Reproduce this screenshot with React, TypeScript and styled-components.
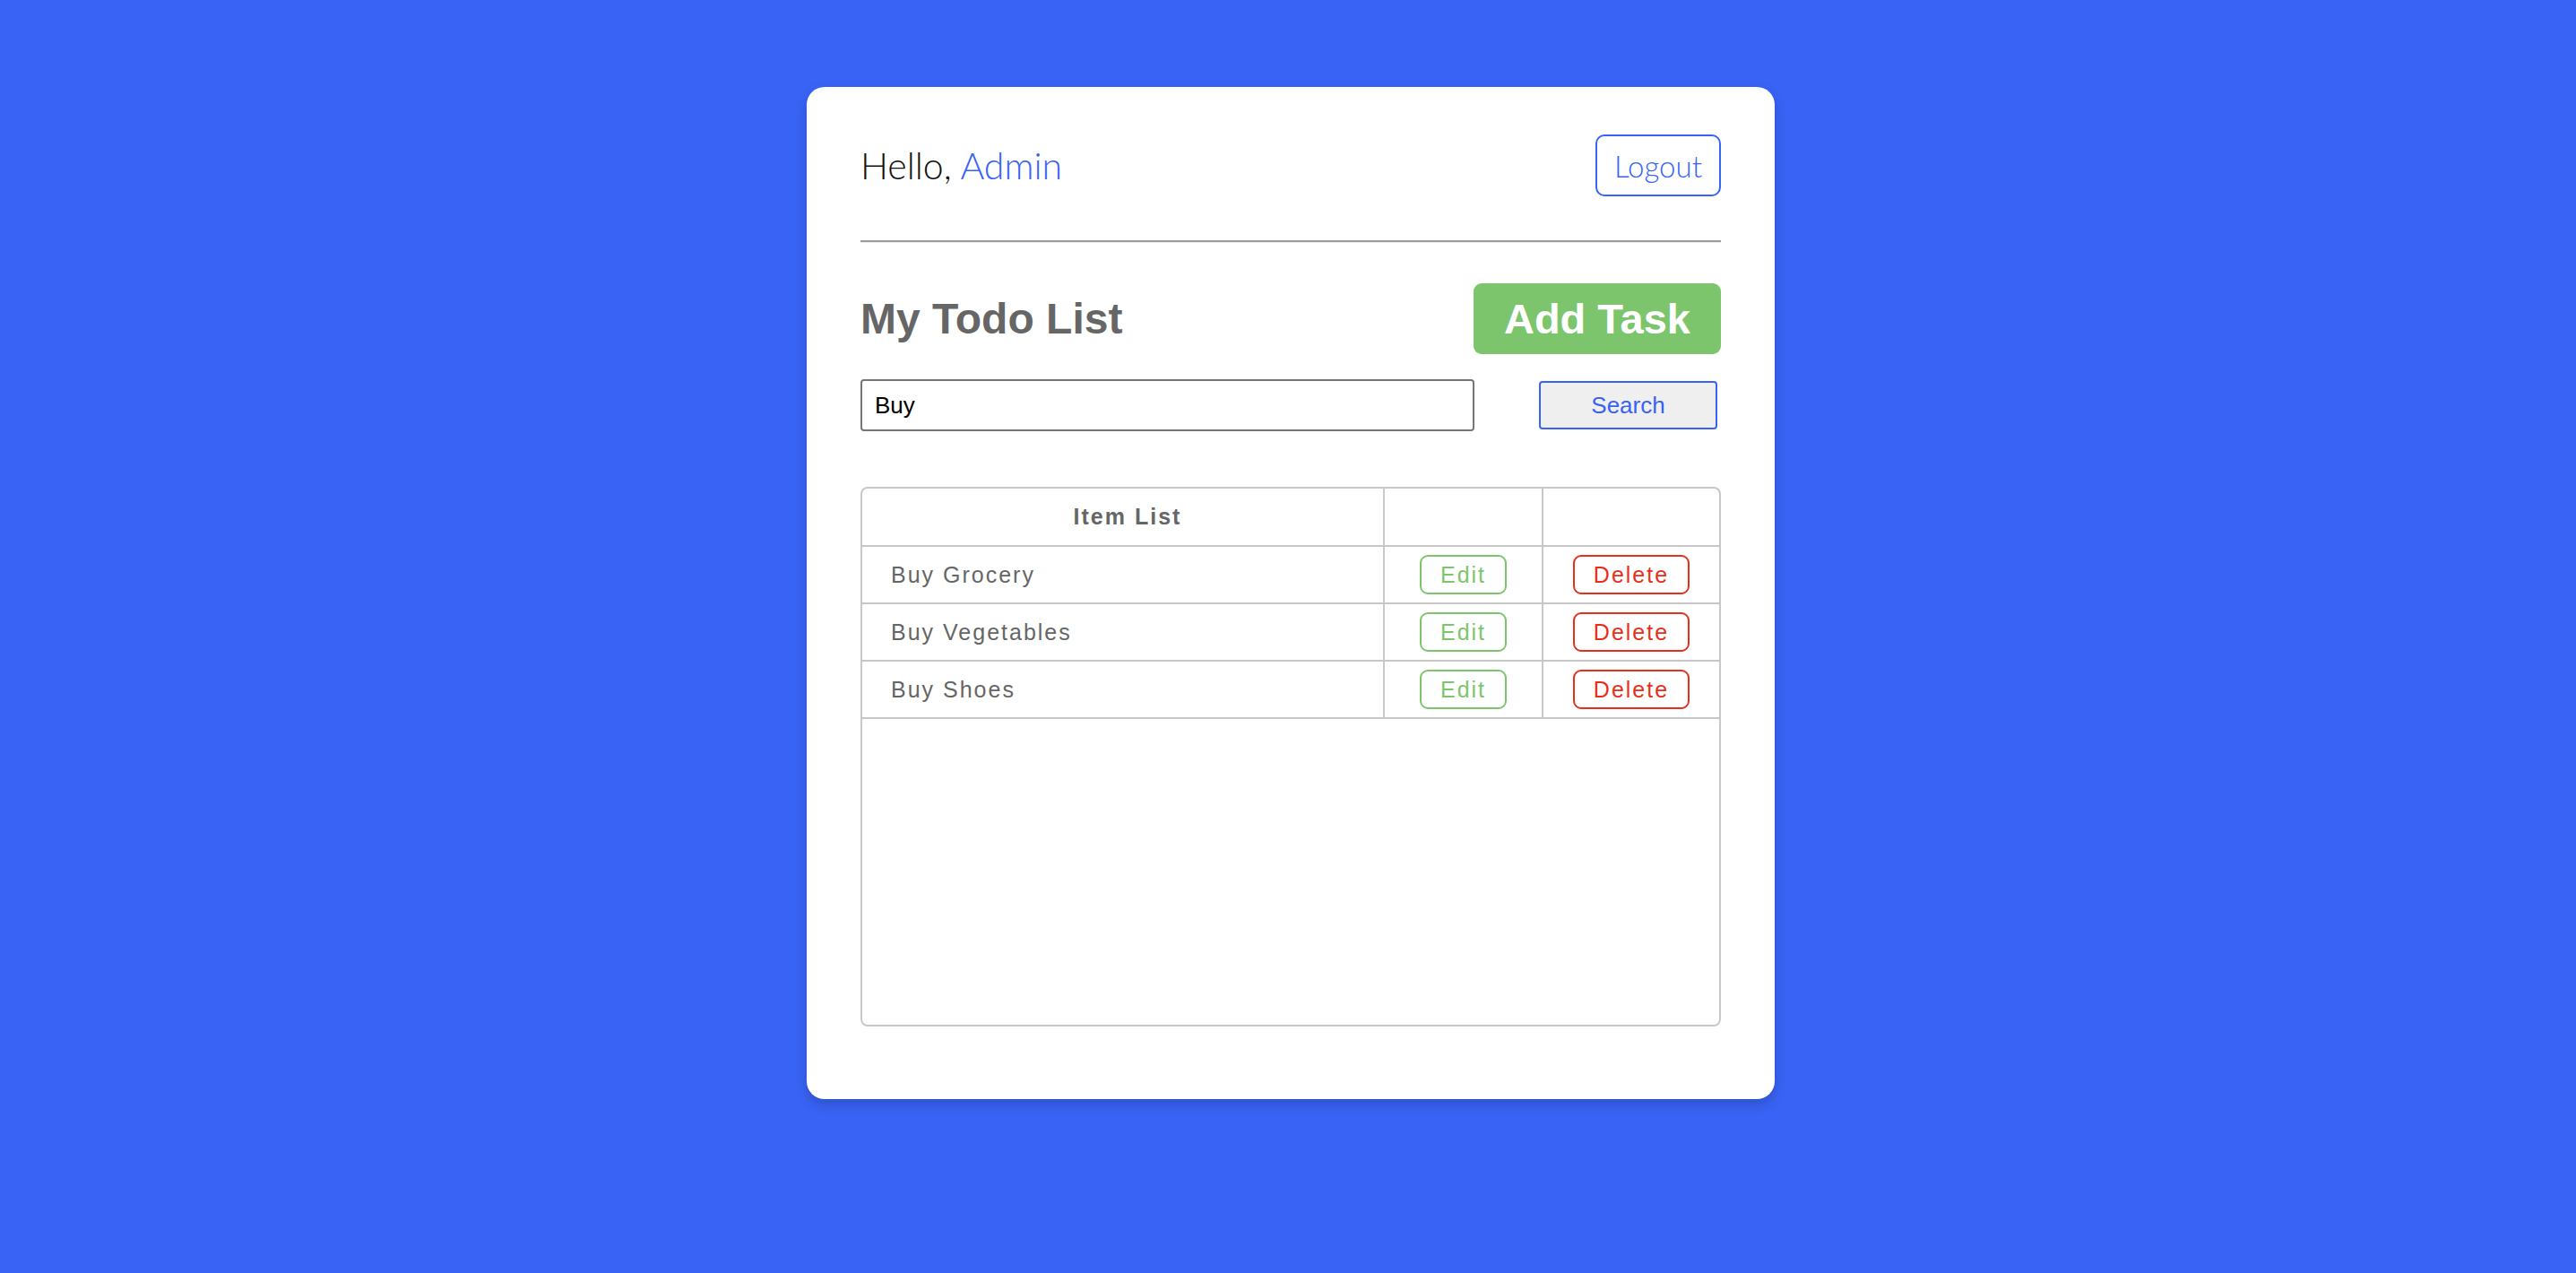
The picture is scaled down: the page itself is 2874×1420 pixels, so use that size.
import styled, { createGlobalStyle } from "styled-components";

const blue = "#3963f5";
const green = "#7cc56d";
const red = "#e5301c";
const line = "#c8c8c8";

const GlobalStyle = createGlobalStyle`
  html, body {
    margin: 0;
    padding: 0;
    background: ${blue};
    min-height: 100%;
  }
  body {
    font-family: "Liberation Sans", Arial, sans-serif;
  }
  * { box-sizing: border-box; }
`;

const Page = styled.div`
  min-height: 1420px;
  padding: 97px 0 0 6px;
`;

const Card = styled.div`
  width: 1080px;
  height: 1129px;
  margin: 0 auto;
  padding: 53px 60px 81px;
  background: #fff;
  border-radius: 20px;
  box-shadow: 0 6px 14px rgba(0, 0, 0, 0.18);
  display: flex;
  flex-direction: column;
`;

const Header = styled.div`
  display: flex;
  justify-content: space-between;
  align-items: center;
  height: 69px;
`;

const Greeting = styled.div`
  font-family: "Lato", "Open Sans", sans-serif;
  font-weight: 300;
  font-size: 41px;
  color: #111;
`;

const Name = styled.span`
  color: ${blue};
`;

const OutlineButton = styled.button<{ $color: string }>`
  font-family: "Lato", "Open Sans", sans-serif;
  font-weight: 300;
  font-size: 33px;
  color: ${(p) => p.$color};
  background: #fff;
  border: 2px solid ${(p) => p.$color};
  border-radius: 10px;
  height: 69px;
  width: 140px;
  padding: 0;
`;

const Divider = styled.hr`
  margin: 49px 0 0;
  border: none;
  border-top: 2px solid #9b9b9b;
  border-bottom: 1px solid #eee;
  height: 0;
`;

const TitleRow = styled.div`
  display: flex;
  justify-content: space-between;
  align-items: center;
  margin-top: 45px;
`;

const Title = styled.h1`
  margin: 0;
  font-size: 48px;
  font-weight: 700;
  color: #666;
`;

const AddButton = styled.button`
  height: 79px;
  padding: 0 34px;
  border: none;
  border-radius: 9px;
  background: ${green};
  color: #fff;
  font-family: "Liberation Sans", Arial, sans-serif;
  font-weight: 700;
  font-size: 47px;
`;

const SearchRow = styled.div`
  display: flex;
  justify-content: space-between;
  align-items: center;
  margin-top: 28px;
`;

const SearchInput = styled.input`
  width: 685px;
  height: 58px;
  border: 2px solid #767676;
  border-radius: 4px;
  padding: 0 14px;
  font-family: "Liberation Sans", Arial, sans-serif;
  font-size: 26px;
  color: #000;
  outline: none;
`;

const SearchButton = styled.button`
  width: 199px;
  height: 54px;
  margin-right: 4px;
  background: #efefef;
  border: 2px solid ${blue};
  border-radius: 4px;
  color: ${blue};
  font-family: "Liberation Sans", Arial, sans-serif;
  font-size: 26px;
`;

const TableBox = styled.div`
  margin-top: 62px;
  flex: 1;
  border: 2px solid ${line};
  border-radius: 8px;
  overflow: hidden;
`;

const Table = styled.table`
  width: 100%;
  border-collapse: collapse;
  table-layout: fixed;
  font-family: "Liberation Sans", Arial, sans-serif;
  letter-spacing: 2px;
  color: #666;
`;

const HeadCell = styled.th<{ $w: number }>`
  width: ${(p) => p.$w}px;
  height: 64px;
  border: 2px solid ${line};
  border-top: none;
  font-size: 25px;
  font-weight: 700;
  text-align: center;
  &:first-child { border-left: none; padding-left: 12px; }
  &:last-child { border-right: none; }
`;

const Cell = styled.td<{ $align?: string }>`
  height: 64px;
  border: 2px solid ${line};
  font-size: 25px;
  padding: 0 0 0 ${(p) => (p.$align === "center" ? 0 : 32)}px;
  text-align: ${(p) => p.$align || "left"};
  &:first-child { border-left: none; }
  &:last-child { border-right: none; }
`;

const RowButton = styled.button<{ $color: string }>`
  height: 44px;
  padding: 0 21px;
  background: #fff;
  border: 2px solid ${(p) => p.$color};
  border-radius: 9px;
  color: ${(p) => p.$color};
  font-family: "Liberation Sans", Arial, sans-serif;
  font-size: 25px;
  letter-spacing: 2px;
`;

const todos = ["Buy Grocery", "Buy Vegetables", "Buy Shoes"];

export default function App() {
  return (
    <Page>
      <GlobalStyle />
      <Card>
        <Header>
          <Greeting>
            Hello, <Name>Admin</Name>
          </Greeting>
          <OutlineButton $color={blue}>Logout</OutlineButton>
        </Header>
        <Divider />
        <TitleRow>
          <Title>My Todo List</Title>
          <AddButton>Add Task</AddButton>
        </TitleRow>
        <SearchRow>
          <SearchInput defaultValue="Buy" />
          <SearchButton>Search</SearchButton>
        </SearchRow>
        <TableBox>
          <Table>
            <thead>
              <tr>
                <HeadCell $w={582}>Item List</HeadCell>
                <HeadCell $w={177}></HeadCell>
                <HeadCell $w={197}></HeadCell>
              </tr>
            </thead>
            <tbody>
              {todos.map((t) => (
                <tr key={t}>
                  <Cell>{t}</Cell>
                  <Cell $align="center">
                    <RowButton $color={green}>Edit</RowButton>
                  </Cell>
                  <Cell $align="center">
                    <RowButton $color={red}>Delete</RowButton>
                  </Cell>
                </tr>
              ))}
            </tbody>
          </Table>
        </TableBox>
      </Card>
    </Page>
  );
}
